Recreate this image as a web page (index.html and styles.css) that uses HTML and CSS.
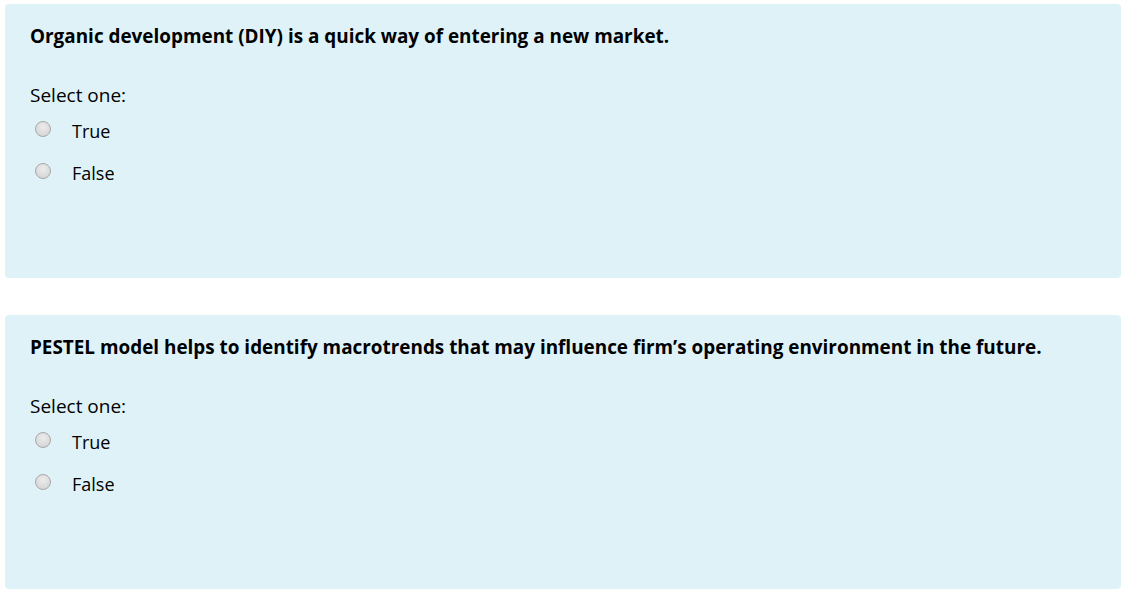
FILE: index.html
```html
<!DOCTYPE html>
<html>
<head>
    <title>Quiz</title>
    <meta name="viewport" content="width=device-width, initial-scale=1.0">
    <link rel="stylesheet" href="styles.css">
</head>
<body>
    <div class="question">
        <p class="qtext">Organic development (DIY) is a quick way of entering a new market.</p>
        <div class="prompt">Select one:</div>
        <div class="answer">
            <label class="option"><input type="radio" name="q1"><span>True</span></label>
            <label class="option"><input type="radio" name="q1"><span>False</span></label>
        </div>
    </div>

    <div class="question">
        <p class="qtext">PESTEL model helps to identify macrotrends that may influence firm’s operating environment in the future.</p>
        <div class="prompt">Select one:</div>
        <div class="answer">
            <label class="option"><input type="radio" name="q2"><span>True</span></label>
            <label class="option"><input type="radio" name="q2"><span>False</span></label>
        </div>
    </div>
</body>
</html>
```

FILE: styles.css
```css
body {
    margin: 0;
    padding: 4px 5px 0 5px;
    background-color: #fff;
    font-family: "Open Sans", sans-serif;
    color: #000;
    font-size: 19px;
}

.question {
    background-color: #def2f8;
    border-radius: 4px;
    height: 274px;
    box-sizing: border-box;
    padding: 20px 25px 0 25px;
}

.question + .question {
    margin-top: 37px;
}

.qtext {
    margin: 0 0 34px 0;
    font-weight: bold;
    font-size: 18.9px;
    line-height: 24px;
}

.prompt {
    line-height: 26px;
    margin-bottom: 10px;
}

.answer {
    display: flex;
    flex-direction: column;
    gap: 16px;
}

.option {
    display: flex;
    align-items: center;
    font-size: 18px;
    line-height: 26px;
}

/* plain grey radio button */
.option input {
    appearance: none;
    width: 16px;
    height: 16px;
    margin: 0 21px 0 5px;
    border: 1px solid #a8a8a8;
    border-radius: 50%;
    background: radial-gradient(circle at 50% 35%, #ececec, #d0d0d0);
    position: relative;
    top: -2px;
}
```
